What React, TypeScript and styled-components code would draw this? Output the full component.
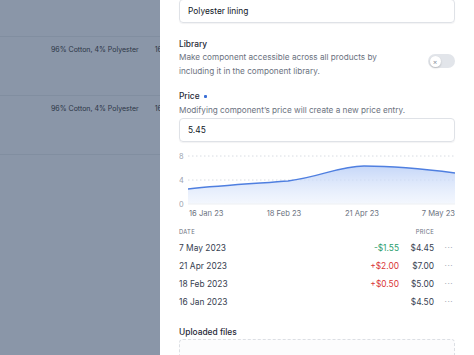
import React from "react";
import styled, {createGlobalStyle} from "styled-components";

const GlobalStyle = createGlobalStyle`
  html, body {
    margin: 0;
    padding: 0;
    width: 474px;
    height: 355px;
    overflow: hidden;
    font-family: Inter, "Noto Sans", sans-serif;
  }
`

const Screen = styled.div`
  display: flex;
  width: 474px;
  height: 355px;
  overflow: hidden;
`

const Backdrop = styled.div`
  width: 160px;
  flex-shrink: 0;
  background: #8a96a8;
  display: flex;
  flex-direction: column;
  overflow: hidden;
`

const BackdropHead = styled.div`
  height: 36px;
  border-bottom: 1px solid #818ea0;
`

const BackdropRow = styled.div`
  height: 59px;
  border-bottom: 1px solid #818ea0;
  display: flex;
  align-items: flex-start;
  padding-top: 8px;
  box-sizing: border-box;
  white-space: nowrap;
  font-size: 7px;
  line-height: 10px;
  color: #2b3546;
  overflow: hidden;
`

const BackdropCell = styled.span<{left: number}>`
  margin-left: ${p => p.left}px;
  flex-shrink: 0;
`

const Panel = styled.div`
  flex: 1;
  background: #ffffff;
  padding: 0 19px;
  display: flex;
  flex-direction: column;
  overflow: hidden;
`

const TextInput = styled.div<{first?: boolean}>`
  height: 24px;
  flex-shrink: 0;
  box-sizing: border-box;
  border: 1px solid #dfe2e7;
  border-radius: 4px;
  box-shadow: 0 1px 1px rgba(16, 24, 40, 0.05);
  display: flex;
  align-items: center;
  padding-left: 8px;
  font-size: 8.4px;
  color: #111827;
  margin-top: ${p => p.first ? "-1px" : "1px"};
`

const Label = styled.div<{top: number}>`
  font-size: 8.4px;
  line-height: 12px;
  font-weight: 500;
  color: #1f2937;
  margin-top: ${p => p.top}px;
  display: flex;
  align-items: center;
  gap: 4px;
`

const Dot = styled.span`
  width: 3px;
  height: 3px;
  background: #3b6fd6;
  border-radius: 1px;
`

const Hint = styled.div`
  font-size: 8.2px;
  line-height: 14px;
  color: #6b7280;
`

const LibraryRow = styled.div`
  display: flex;
  align-items: center;
  justify-content: space-between;
`

const Toggle = styled.div`
  width: 27px;
  height: 14px;
  border-radius: 7px;
  background: #e2e5ea;
  padding: 1.5px;
  box-sizing: border-box;
  flex-shrink: 0;
  margin-top: -6px;
`

const Knob = styled.div`
  width: 11px;
  height: 11px;
  border-radius: 50%;
  background: #ffffff;
  box-shadow: 0 1px 2px rgba(0, 0, 0, 0.2);
  display: flex;
  align-items: center;
  justify-content: center;
  font-size: 7px;
  color: #8b929c;
  line-height: 1;
`

const PriceHint = styled(Hint)`
  margin-top: 1px;
`

const Chart = styled.svg`
  display: block;
  margin-top: 8px;
  flex-shrink: 0;
`

const Table = styled.div`
  display: grid;
  grid-template-columns: 1fr auto 30px 21px;
  align-items: center;
  margin-top: 7px;
  font-size: 8.4px;
  color: #374151;
`

const HeadCell = styled.div<{right?: boolean}>`
  font-size: 5.8px;
  letter-spacing: 0.3px;
  color: #6b7280;
  text-transform: uppercase;
  text-align: ${p => p.right ? "right" : "left"};
  height: 14px;
  line-height: 14px;
`

const Cell = styled.div<{right?: boolean; tone?: "up" | "down"}>`
  height: 18px;
  line-height: 18px;
  text-align: ${p => p.right ? "right" : "left"};
  color: ${p => p.tone === "down" ? "#2a9d6c" : p.tone === "up" ? "#d93636" : "#374151"};
  padding-right: ${p => p.tone ? "5px" : "0"};
  white-space: nowrap;
`

const More = styled.div`
  height: 18px;
  line-height: 16px;
  text-align: right;
  padding-right: 2px;
  color: #9ca3af;
  font-size: 8px;
  letter-spacing: 0.5px;
`

const DropZone = styled.div`
  margin-top: 1px;
  height: 40px;
  flex-shrink: 0;
  border: 1px dashed #dcdfe4;
  border-radius: 4px;
  background: #fcfcfd;
`

const rows = [
    {date: "7 May 2023", change: "-$1.55", tone: "down" as const, price: "$4.45"},
    {date: "21 Apr 2023", change: "+$2.00", tone: "up" as const, price: "$7.00"},
    {date: "18 Feb 2023", change: "+$0.50", tone: "up" as const, price: "$5.00"},
    {date: "16 Jan 2023", change: "", tone: undefined, price: "$4.50"},
]

const linePath = "M9,39 C45,35 85,33 109,31 C142,27 160,16 185,16 C217,16 246,19 276,23";

const PriceChart: React.FC = () => (
    <Chart width={276} height={68} viewBox="0 0 276 68">
        <defs>
            <linearGradient id="fill" x1="0" y1="0" x2="0" y2="1">
                <stop offset="0%" stopColor="#bcd0f7" stopOpacity={0.85}/>
                <stop offset="100%" stopColor="#e8effc" stopOpacity={0.5}/>
            </linearGradient>
        </defs>
        <g fontFamily="Inter, sans-serif" fontSize="7.4" fill="#9ca3af">
            <text x="0" y="8.5">8</text>
            <text x="0" y="32.5">4</text>
            <text x="0" y="56.5">0</text>
        </g>
        <line x1="9" y1="6" x2="276" y2="6" stroke="#d8dce2" strokeWidth="1" strokeDasharray="1.5 2.5"/>
        <line x1="9" y1="30" x2="276" y2="30" stroke="#d8dce2" strokeWidth="1" strokeDasharray="1.5 2.5"/>
        <path d={`${linePath} L276,54 L9,54 Z`} fill="url(#fill)"/>
        <line x1="9" y1="54" x2="276" y2="54" stroke="#eef0f3" strokeWidth="1"/>
        <path d={linePath} fill="none" stroke="#4f7fe0" strokeWidth="1.3"/>
        <g fontFamily="Inter, sans-serif" fontSize="7.6" fill="#6b7280">
            <text x="10" y="66">16 Jan 23</text>
            <text x="105" y="66" textAnchor="middle">18 Feb 23</text>
            <text x="183" y="66" textAnchor="middle">21 Apr 23</text>
            <text x="276" y="66" textAnchor="end">7 May 23</text>
        </g>
    </Chart>
)

const App: React.FC = () => {
    return (
        <Screen>
            <GlobalStyle/>
            <Backdrop>
                <BackdropHead/>
                <BackdropRow>
                    <BackdropCell left={51}>96% Cotton, 4% Polyester</BackdropCell>
                    <BackdropCell left={16}>16</BackdropCell>
                </BackdropRow>
                <BackdropRow>
                    <BackdropCell left={51}>96% Cotton, 4% Polyester</BackdropCell>
                    <BackdropCell left={16}>16</BackdropCell>
                </BackdropRow>
            </Backdrop>

            <Panel>
                <TextInput first>Polyester lining</TextInput>

                <Label top={15}>Library</Label>
                <LibraryRow>
                    <Hint>
                        Make component accessible across all products by<br/>
                        including it in the component library.
                    </Hint>
                    <Toggle>
                        <Knob>×</Knob>
                    </Toggle>
                </LibraryRow>

                <Label top={12}>Price <Dot/></Label>
                <PriceHint>Modifying component’s price will create a new price entry.</PriceHint>
                <TextInput>5.45</TextInput>

                <PriceChart/>

                <Table>
                    <HeadCell>Date</HeadCell>
                    <HeadCell/>
                    <HeadCell right>Price</HeadCell>
                    <HeadCell/>
                    {rows.map(row => (
                        <React.Fragment key={row.date}>
                            <Cell>{row.date}</Cell>
                            <Cell right tone={row.tone}>{row.change}</Cell>
                            <Cell right>{row.price}</Cell>
                            <More>···</More>
                        </React.Fragment>
                    ))}
                </Table>

                <Label top={15}>Uploaded files</Label>
                <DropZone/>
            </Panel>
        </Screen>
    )
}

export default App;
